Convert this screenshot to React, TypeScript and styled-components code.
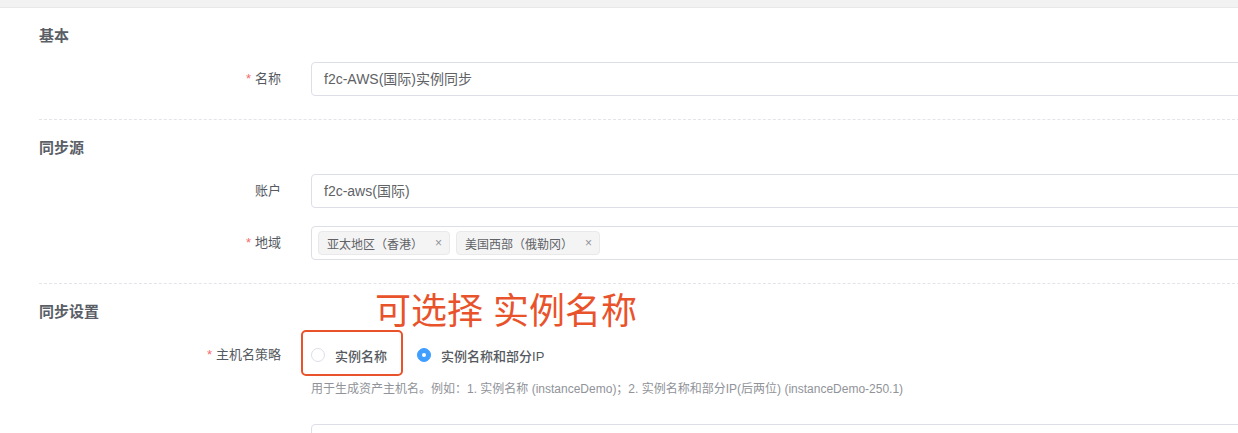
import React from "react";
import styled, { createGlobalStyle } from "styled-components";

const Global = createGlobalStyle`
  html, body { margin: 0; padding: 0; background: #fff; overflow: hidden; }
  body { font-family: "Liberation Sans", "Noto Sans CJK SC", sans-serif; color: #606266; }
  * { box-sizing: border-box; }
`;

const Page = styled.div`
  position: relative;
  width: 100%;
  height: 433px;
  overflow: hidden;
`;

const TopBar = styled.div`
  height: 8px;
  background: #f2f2f2;
  border-bottom: 1px solid #e8e8e8;
`;

const Content = styled.div`
  padding-left: 39px;
  margin-right: -12px;
`;

const Section = styled.section`
  padding: 18px 0 5px;
`;

const SectionTitle = styled.h3`
  margin: 0 0 16px;
  font-size: 15px;
  line-height: 20px;
  font-weight: bold;
  color: #5a5e66;
`;

const Divider = styled.div`
  border-top: 1px dashed #e2e4e8;
`;

const FormItem = styled.div<{ $mb?: number }>`
  display: flex;
  align-items: flex-start;
  margin-bottom: ${(p) => (p.$mb ?? 18)}px;
`;

const Label = styled.label`
  flex: 0 0 272px;
  text-align: right;
  padding-right: 30px;
  font-size: 13px;
  line-height: 34px;
  color: #555a61;
`;

const Star = styled.span`
  color: #f56c6c;
  margin-right: 4px;
`;

const Field = styled.div`
  flex: 1;
  min-width: 0;
`;

const Input = styled.div`
  height: 34px;
  border: 1px solid #dcdfe6;
  border-radius: 4px;
  padding: 0 12px;
  font-size: 14px;
  line-height: 32px;
  color: #606266;
  background: #fff;
`;

const TagInput = styled.div`
  height: 34px;
  border: 1px solid #dcdfe6;
  border-radius: 4px;
  padding: 0 6px;
  display: flex;
  align-items: center;
  gap: 6px;
`;

const Tag = styled.span`
  display: inline-flex;
  align-items: center;
  height: 24px;
  padding: 0 7px 0 8px;
  background: #f4f4f5;
  border: 1px solid #e9e9eb;
  border-radius: 4px;
  font-size: 12px;
  color: #606266;
`;

const TagClose = styled.span`
  margin-left: 12px;
  font-size: 12px;
  color: #909399;
`;

const RadioGroup = styled.div`
  display: flex;
  align-items: center;
  height: 34px;
  gap: 30px;
`;

const Radio = styled.label`
  display: inline-flex;
  align-items: center;
  gap: 10px;
  font-size: 13px;
  color: #555a61;
  font-weight: 500;
`;

const RadioDot = styled.span<{ $checked?: boolean }>`
  width: 14px;
  height: 14px;
  border-radius: 50%;
  border: 1px solid ${(p) => (p.$checked ? "#409eff" : "#dcdfe6")};
  background: ${(p) => (p.$checked ? "#409eff" : "#fff")};
  display: inline-flex;
  align-items: center;
  justify-content: center;
  &::after {
    content: "";
    width: 4px;
    height: 4px;
    border-radius: 50%;
    background: #fff;
    display: ${(p) => (p.$checked ? "block" : "none")};
  }
`;

const Help = styled.div`
  margin-top: 7px;
  font-size: 12px;
  line-height: 20px;
  color: #909399;
`;

const Annotation = styled.div`
  position: absolute;
  left: 375px;
  top: 292px;
  font-size: 36px;
  line-height: 40px;
  color: #e9532c;
  white-space: nowrap;
`;

const Highlight = styled.div`
  position: absolute;
  left: 301px;
  top: 330px;
  width: 102px;
  height: 46px;
  border: 2px solid #e9532c;
  border-radius: 5px;
`;

export default function App() {
  return (
    <Page>
      <Global />
      <TopBar />
      <Content>
        <Section>
          <SectionTitle>基本</SectionTitle>
          <FormItem>
            <Label><Star>*</Star>名称</Label>
            <Field><Input>f2c-AWS(国际)实例同步</Input></Field>
          </FormItem>
        </Section>
        <Divider />
        <Section>
          <SectionTitle>同步源</SectionTitle>
          <FormItem>
            <Label>账户</Label>
            <Field><Input>f2c-aws(国际)</Input></Field>
          </FormItem>
          <FormItem>
            <Label><Star>*</Star>地域</Label>
            <Field>
              <TagInput>
                <Tag>亚太地区（香港）<TagClose>×</TagClose></Tag>
                <Tag>美国西部（俄勒冈）<TagClose>×</TagClose></Tag>
              </TagInput>
            </Field>
          </FormItem>
        </Section>
        <Divider />
        <Section>
          <SectionTitle>同步设置</SectionTitle>
          <FormItem $mb={25}>
            <Label><Star>*</Star>主机名策略</Label>
            <Field>
              <RadioGroup>
                <Radio><RadioDot />实例名称</Radio>
                <Radio><RadioDot $checked />实例名称和部分IP</Radio>
              </RadioGroup>
              <Help>用于生成资产主机名。例如：1. 实例名称 (instanceDemo)；2. 实例名称和部分IP(后两位) (instanceDemo-250.1)</Help>
            </Field>
          </FormItem>
          <FormItem>
            <Label />
            <Field><Input /></Field>
          </FormItem>
        </Section>
      </Content>
      <Annotation>可选择 实例名称</Annotation>
      <Highlight />
    </Page>
  );
}
